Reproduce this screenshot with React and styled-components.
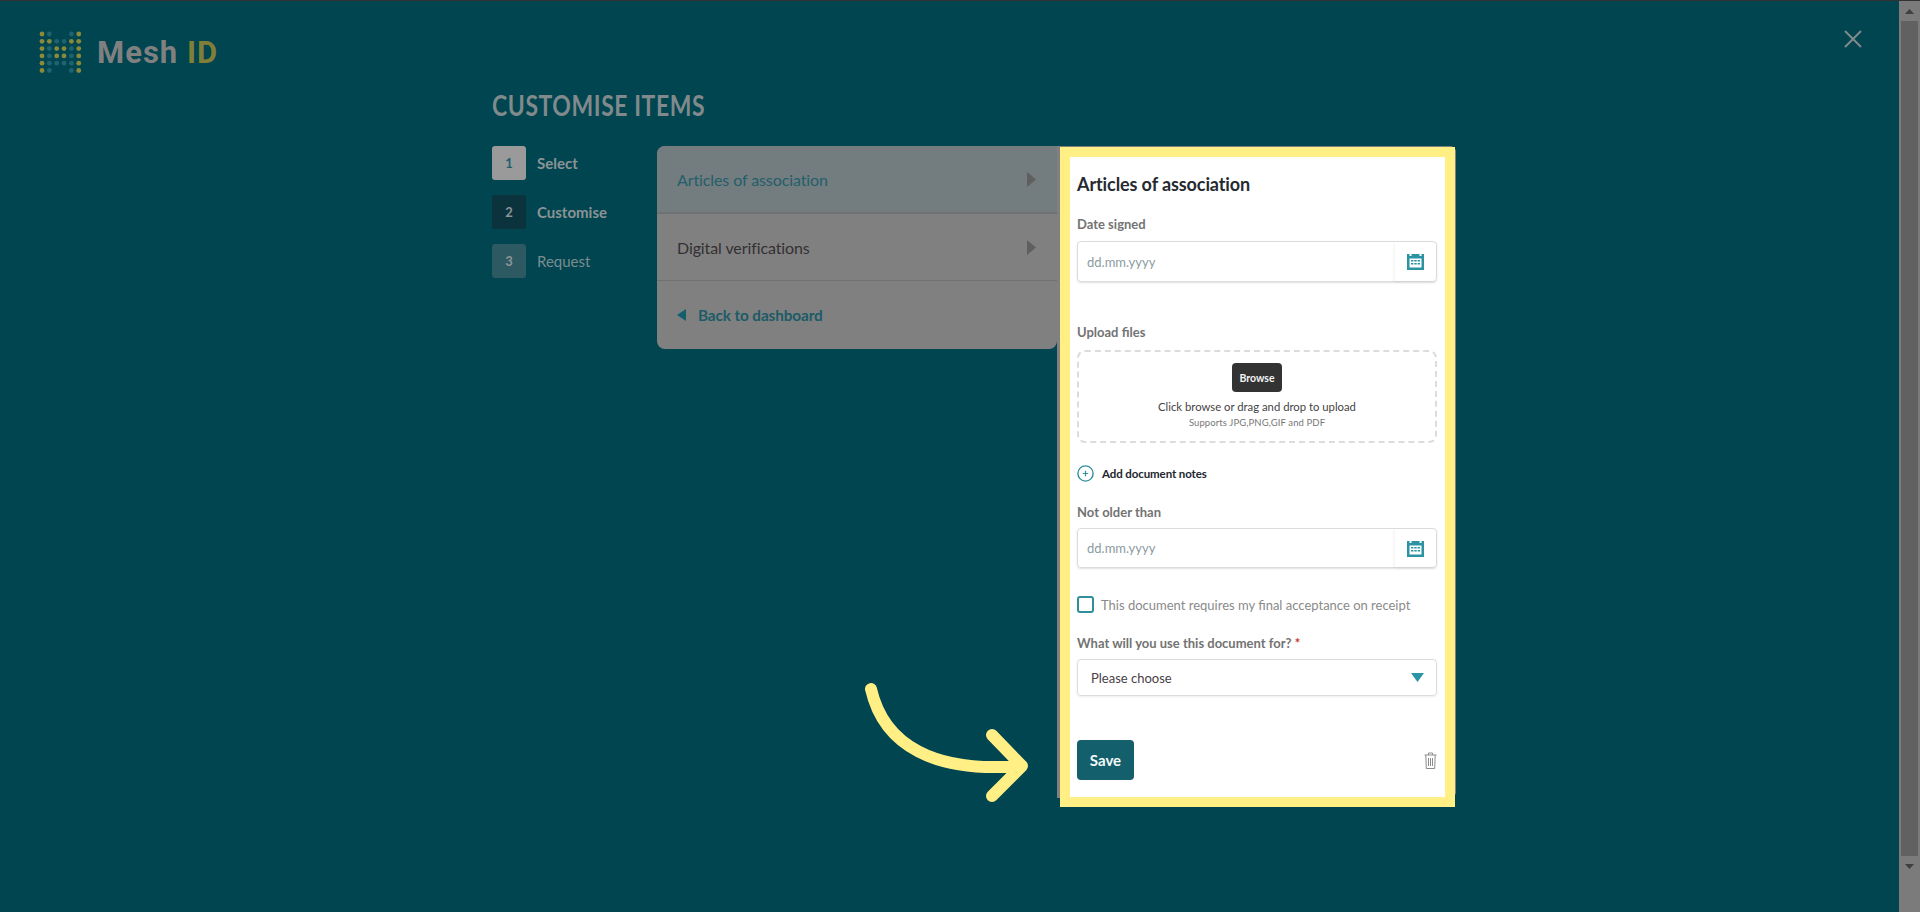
import React from "react"
import styled, { createGlobalStyle } from "styled-components"

const GlobalStyle = createGlobalStyle`
  html, body, #root {
    margin: 0;
    height: 100%;
  }
  body {
    font-family: Lato, "Noto Sans", sans-serif;
    background: #00454f;
    overflow: hidden;
  }
`

const Page = styled.div`
  display: flex;
  height: 912px;
  border-top: 1px solid #333;
  box-sizing: border-box;
`

const Main = styled.main`
  flex: 1;
  min-width: 0;
  background: #00454f;
  position: relative;
`

const Header = styled.header`
  display: flex;
  justify-content: space-between;
  align-items: flex-start;
  padding: 30px 37px 0 39px;
  height: 55px;
`

const LogoRow = styled.div`
  display: flex;
  align-items: center;
  gap: 14px;
  height: 44px;
`

const LogoText = styled.div`
  font-family: Roboto, sans-serif;
  font-weight: 700;
  font-size: 31px;
  line-height: 44px;
  color: #808080;
  letter-spacing: 1px;
  span {
    color: #807f38;
  }
`

const CloseButton = styled.button`
  border: 0;
  background: none;
  padding: 0;
  margin-top: -1px;
  width: 18px;
  height: 18px;
  display: block;
`

const Content = styled.div`
  margin-left: 492px;
  width: 964px;
`

const Title = styled.h1`
  margin: 0 0 22px;
  font-size: 28px;
  line-height: 38px;
  font-weight: 700;
  letter-spacing: 0.7px;
  color: #808a8c;
  transform: scaleX(0.82);
  transform-origin: left center;
`

const Columns = styled.div`
  display: grid;
  grid-template-columns: 165px 400px 399px;
  align-items: start;
`

const Steps = styled.ol`
  list-style: none;
  margin: 0;
  padding: 0;
  display: flex;
  flex-direction: column;
  gap: 15px;
`

const Step = styled.li`
  display: flex;
  align-items: center;
  gap: 11px;
  font-size: 15px;
  height: 34px;
  font-weight: ${(p) => (p.$muted ? 400 : 700)};
  color: ${(p) => (p.$muted ? "#7b8c90" : "#8b9496")};
`

const StepBadge = styled.span`
  width: 34px;
  height: 34px;
  border-radius: 3px;
  display: flex;
  align-items: center;
  justify-content: center;
  font-size: 13px;
  font-weight: 700;
  background: ${(p) => p.$bg};
  color: ${(p) => p.$fg};
`

const ItemList = styled.div`
  background: #808080;
  border-radius: 8px 0 8px 8px;
  overflow: hidden;
`

const Item = styled.div`
  height: ${(p) => p.$h}px;
  box-sizing: border-box;
  padding: 0 21px 0 20px;
  display: flex;
  align-items: center;
  justify-content: space-between;
  font-size: 16px;
  letter-spacing: -0.1px;
  background: ${(p) => (p.$active ? "#737c7f" : "transparent")};
  color: ${(p) => (p.$active ? "#235f6b" : "#333033")};
  border-bottom: ${(p) => p.$line}px solid #6f7272;
`

const BackRow = styled.div`
  height: 68px;
  padding: 0 20px;
  display: flex;
  align-items: center;
  gap: 12px;
  font-size: 15.3px;
  font-weight: 700;
  letter-spacing: -0.1px;
  color: #1c5b67;
`

const Triangle = styled.svg`
  display: block;
  flex: none;
`

const DetailPanel = styled.section`
  position: relative;
  height: 652px;
  background: #fff;
  box-sizing: border-box;
  padding: 0 18px 0 17px;
  border: 1px solid #808080;
  border-left-width: 3px;
  border-radius: 0 6px 6px 0;
`

const Highlight = styled.div`
  position: absolute;
  left: 0;
  top: 0;
  right: 0;
  bottom: -10px;
  border: 10px solid #ffef85;
  pointer-events: none;
`

const PanelTitle = styled.h2`
  margin: 0;
  padding-top: 25px;
  font-size: 18px;
  line-height: 24px;
  font-weight: 700;
  letter-spacing: -0.1px;
  color: #262a30;
`

const Label = styled.label`
  display: block;
  font-size: 13px;
  line-height: 17px;
  font-weight: 700;
  color: #737373;
  margin-top: ${(p) => p.$top}px;
  span {
    color: #c0392b;
  }
`

const DateField = styled.div`
  margin-top: ${(p) => p.$top}px;
  height: ${(p) => p.$h}px;
  border: 1px solid #dcdcdc;
  border-radius: 4px;
  box-shadow: 0 1px 2px rgba(0, 0, 0, 0.12);
  box-sizing: border-box;
  display: flex;
  align-items: center;
  justify-content: space-between;
  padding-left: 9px;
  font-size: 13px;
  color: #8c9ba1;
`

const CalendarButton = styled.span`
  width: 41px;
  height: 100%;
  display: flex;
  align-items: center;
  justify-content: center;
  box-shadow: -1px 1px 3px rgba(0, 0, 0, 0.06);
  border-radius: 0 4px 4px 0;
`

const DropZone = styled.div`
  margin-top: 9px;
  height: 93px;
  box-sizing: border-box;
  border: 2px dashed #dcdcdc;
  border-radius: 8px;
  display: flex;
  flex-direction: column;
  align-items: center;
  padding-top: 11px;
`

const BrowseButton = styled.button`
  width: 50px;
  height: 29px;
  border: 0;
  border-radius: 4px;
  background: #333;
  color: #f2f2f2;
  font-family: inherit;
  font-size: 10.5px;
  font-weight: 700;
  padding: 0;
`

const DropText = styled.div`
  margin-top: 7px;
  font-size: 11.3px;
  line-height: 15px;
  color: #444;
`

const DropHint = styled.div`
  margin-top: 2px;
  font-size: 9.5px;
  line-height: 13px;
  letter-spacing: 0.1px;
  color: #777;
`

const NotesRow = styled.div`
  margin-top: 22px;
  display: flex;
  align-items: center;
  gap: 8px;
  font-size: 11.5px;
  letter-spacing: -0.1px;
  font-weight: 700;
  height: 17px;
  color: #23272e;
`

const CheckRow = styled.div`
  margin-top: 28px;
  display: flex;
  align-items: center;
  gap: 7px;
  font-size: 13px;
  height: 17px;
  color: #8a8a8a;
`

const CheckBox = styled.span`
  width: 17px;
  height: 17px;
  box-sizing: border-box;
  border: 2px solid #2f8f9d;
  border-radius: 3px;
  flex: none;
`

const SelectBox = styled.div`
  margin-top: 7px;
  height: 37px;
  box-sizing: border-box;
  border: 1px solid #dcdcdc;
  border-radius: 4px;
  box-shadow: 0 1px 2px rgba(0, 0, 0, 0.08);
  display: flex;
  align-items: center;
  justify-content: space-between;
  padding: 0 12px 0 13px;
  font-size: 13px;
  color: #4a4048;
`

const Footer = styled.div`
  margin-top: 44px;
  display: flex;
  align-items: center;
  justify-content: space-between;
`

const SaveButton = styled.button`
  width: 57px;
  height: 40px;
  border: 0;
  border-radius: 4px;
  background: #135f6c;
  color: #f4f8f9;
  font-family: inherit;
  font-size: 15px;
  font-weight: 700;
  padding: 0;
`

const ArrowMark = styled.svg`
  position: absolute;
  left: 860px;
  top: 675px;
`

const Scrollbar = styled.aside`
  width: 21px;
  flex: none;
  background: #7b7b7b;
  display: flex;
  flex-direction: column;
  align-items: center;
`

const ScrollButton = styled.div`
  height: 20px;
  display: flex;
  align-items: center;
  justify-content: center;
  flex: none;
`

const ScrollThumb = styled.div`
  width: 17px;
  height: 835px;
  background: #616161;
`

const logoDots = ["YT..TY", "YYTTYY", "YTYYTY", "YTYYTY", "YTTTTY", "YT..TY"]

const Logo = () => (
  <svg width="44" height="44" viewBox="0 0 44 44">
    {logoDots.map((row, y) =>
      row.split("").map((c, x) =>
        c === "." ? null : (
          <circle
            key={`${x}-${y}`}
            cx={3 + x * 7.35}
            cy={3 + y * 7.3}
            r="2.4"
            fill={c === "Y" ? "#8a8a3a" : "#1f6370"}
          />
        )
      )
    )}
  </svg>
)

const CalendarIcon = () => (
  <svg width="17" height="17" viewBox="0 0 17 17">
    <path fill="#2c93a3" d="M0 1h2.5v2h2V1h8v2h2V1H17v16H0z" />
    <rect x="2.5" y="5.5" width="12" height="9" fill="#fff" />
    <path
      fill="#2c93a3"
      d="M4 7h2.4v1.6H4zM7.3 7h2.4v1.6H7.3zM10.6 7H13v1.6h-2.4zM4 10h2.4v1.6H4zM7.3 10h2.4v1.6H7.3zM10.6 10H13v1.6h-2.4z"
    />
  </svg>
)

const PlusIcon = () => (
  <svg width="17" height="17" viewBox="0 0 17 17" fill="none">
    <circle cx="8.5" cy="8.5" r="7.6" stroke="#2f8f9d" strokeWidth="1.4" />
    <path d="M8.5 5.8v5.4M5.8 8.5h5.4" stroke="#2f8f9d" strokeWidth="1.2" />
  </svg>
)

const TrashIcon = () => (
  <svg width="13" height="17" viewBox="0 0 13 17" fill="none" stroke="#8c8c8c">
    <path d="M0.5 3h12M4.5 3V1h4v2M1.8 3l.5 13.5h8.4l.5-13.5" strokeWidth="1" />
    <path d="M4.5 6v8M6.5 6v8M8.5 6v8" strokeWidth="1" />
  </svg>
)

const App = () => (
  <>
    <GlobalStyle />
    <Page>
      <Main>
        <Header>
          <LogoRow>
            <Logo />
            <LogoText>
              Mesh <span>ID</span>
            </LogoText>
          </LogoRow>
          <CloseButton aria-label="Close">
            <svg width="18" height="18" viewBox="0 0 18 18">
              <path d="M1 1l16 16M17 1L1 17" stroke="#7f8a8c" strokeWidth="2" />
            </svg>
          </CloseButton>
        </Header>
        <Content>
          <Title>CUSTOMISE ITEMS</Title>
          <Columns>
            <Steps>
              <Step>
                <StepBadge $bg="#9a9a9a" $fg="#1f5f6b">1</StepBadge>
                Select
              </Step>
              <Step>
                <StepBadge $bg="#0a333d" $fg="#8b9496">2</StepBadge>
                Customise
              </Step>
              <Step $muted>
                <StepBadge $bg="#2d5a62" $fg="#8b9496">3</StepBadge>
                Request
              </Step>
            </Steps>
            <ItemList>
              <Item $active $h={68} $line={2}>
                Articles of association
                <Triangle width="9" height="15" viewBox="0 0 9 15">
                  <path d="M0 0l9 7.5L0 15z" fill="#5f5f5f" />
                </Triangle>
              </Item>
              <Item $h={67} $line={1}>
                Digital verifications
                <Triangle width="9" height="15" viewBox="0 0 9 15">
                  <path d="M0 0l9 7.5L0 15z" fill="#5f5f5f" />
                </Triangle>
              </Item>
              <BackRow>
                <Triangle width="9" height="12" viewBox="0 0 9 12">
                  <path d="M9 0L0 6l9 6z" fill="#145f6e" />
                </Triangle>
                Back to dashboard
              </BackRow>
            </ItemList>
            <DetailPanel>
              <Highlight />
              <PanelTitle>Articles of association</PanelTitle>
              <Label $top={20}>Date signed</Label>
              <DateField $top={8} $h={41}>
                dd.mm.yyyy
                <CalendarButton><CalendarIcon /></CalendarButton>
              </DateField>
              <Label $top={42}>Upload files</Label>
              <DropZone>
                <BrowseButton>Browse</BrowseButton>
                <DropText>Click browse or drag and drop to upload</DropText>
                <DropHint>Supports JPG,PNG,GIF and PDF</DropHint>
              </DropZone>
              <NotesRow>
                <PlusIcon />
                Add document notes
              </NotesRow>
              <Label $top={22}>Not older than</Label>
              <DateField $top={7} $h={40}>
                dd.mm.yyyy
                <CalendarButton><CalendarIcon /></CalendarButton>
              </DateField>
              <CheckRow>
                <CheckBox />
                This document requires my final acceptance on receipt
              </CheckRow>
              <Label $top={22}>
                What will you use this document for? <span>*</span>
              </Label>
              <SelectBox>
                Please choose
                <Triangle width="13" height="9" viewBox="0 0 13 9">
                  <path d="M0 0h13L6.5 9z" fill="#2a95a5" />
                </Triangle>
              </SelectBox>
              <Footer>
                <SaveButton>Save</SaveButton>
                <TrashIcon />
              </Footer>
            </DetailPanel>
          </Columns>
        </Content>
        <ArrowMark width="180" height="130" viewBox="860 675 180 130" fill="none">
          <path
            d="M871 688C884 745 935 772 1020 765M992 734l30 31-30 30"
            stroke="#ffef85"
            strokeWidth="12"
            strokeLinecap="round"
            strokeLinejoin="round"
          />
        </ArrowMark>
      </Main>
      <Scrollbar>
        <ScrollButton>
          <svg width="9" height="5" viewBox="0 0 9 5"><path d="M4.5 0L9 5H0z" fill="#3f3f3f" /></svg>
        </ScrollButton>
        <ScrollThumb />
        <ScrollButton>
          <svg width="9" height="5" viewBox="0 0 9 5"><path d="M0 0h9L4.5 5z" fill="#3f3f3f" /></svg>
        </ScrollButton>
      </Scrollbar>
    </Page>
  </>
)

export default App
